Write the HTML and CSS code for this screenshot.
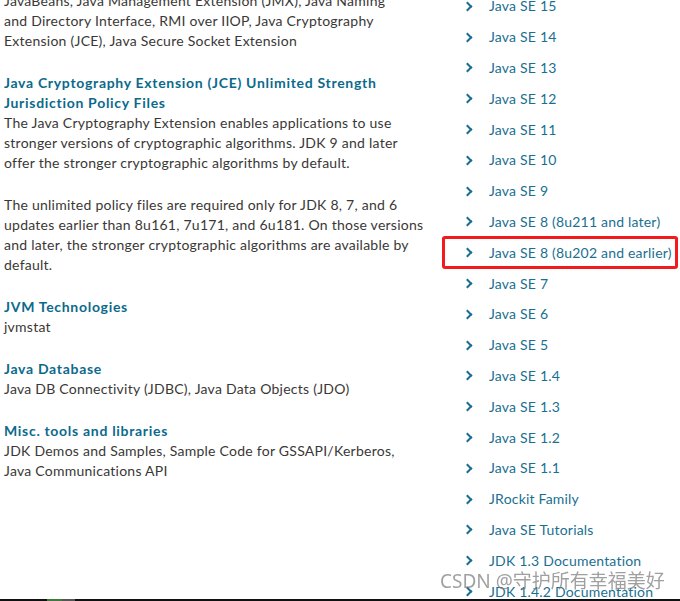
FILE: index.html
```html
<!DOCTYPE html>
<html lang="en">
<head>
<meta charset="utf-8">
<title>Java SE docs</title>
<link rel="stylesheet" href="styles.css">
</head>
<body>
<div class="page">
  <div class="main">
    <div class="block">
      <p>JavaBeans, Java Management Extension (JMX), Java Naming<br>and Directory Interface, RMI over IIOP, Java Cryptography<br>Extension (JCE), Java Secure Socket Extension</p>
    </div>
    <div class="block">
      <h3>Java Cryptography Extension (JCE) Unlimited Strength<br>Jurisdiction Policy Files</h3>
      <p>The Java Cryptography Extension enables applications to use<br>stronger versions of cryptographic algorithms. JDK 9 and later<br>offer the stronger cryptographic algorithms by default.</p>
    </div>
    <div class="block">
      <p>The unlimited policy files are required only for JDK 8, 7, and 6<br>updates earlier than 8u161, 7u171, and 6u181. On those versions<br>and later, the stronger cryptographic algorithms are available by<br>default.</p>
    </div>
    <div class="block">
      <h3>JVM Technologies</h3>
      <p>jvmstat</p>
    </div>
    <div class="block">
      <h3>Java Database</h3>
      <p>Java DB Connectivity (JDBC), Java Data Objects (JDO)</p>
    </div>
    <div class="block">
      <h3>Misc. tools and libraries</h3>
      <p>JDK Demos and Samples, Sample Code for GSSAPI/Kerberos,<br>Java Communications API</p>
    </div>
  </div>
  <ul class="side">
    <li><span class="chev"></span>Java SE 15</li>
    <li><span class="chev"></span>Java SE 14</li>
    <li><span class="chev"></span>Java SE 13</li>
    <li><span class="chev"></span>Java SE 12</li>
    <li><span class="chev"></span>Java SE 11</li>
    <li><span class="chev"></span>Java SE 10</li>
    <li><span class="chev"></span>Java SE 9</li>
    <li><span class="chev"></span>Java SE 8 (8u211 and later)</li>
    <li class="marked"><span class="chev"></span>Java SE 8 (8u202 and earlier)</li>
    <li><span class="chev"></span>Java SE 7</li>
    <li><span class="chev"></span>Java SE 6</li>
    <li><span class="chev"></span>Java SE 5</li>
    <li><span class="chev"></span>Java SE 1.4</li>
    <li><span class="chev"></span>Java SE 1.3</li>
    <li><span class="chev"></span>Java SE 1.2</li>
    <li><span class="chev"></span>Java SE 1.1</li>
    <li><span class="chev"></span>JRockit Family</li>
    <li><span class="chev"></span>Java SE Tutorials</li>
    <li><span class="chev"></span>JDK 1.3 Documentation</li>
    <li><span class="chev"></span>JDK 1.4.2 Documentation</li>
  </ul>
</div>
<div class="watermark">CSDN @守护所有幸福美好</div>
<div class="edge"><span class="edge-green"></span><span class="edge-grey"></span></div>
</body>
</html>
```
FILE: styles.css
```css
html, body {
  margin: 0;
  padding: 0;
  background: #ffffff;
  overflow: hidden;
  height: 601px;
}
body {
  font-family: Lato, "Noto Sans", sans-serif;
  font-size: 14px;
  line-height: 20px;
  letter-spacing: 0.25px;
  color: #3a3836;
}
.page {
  display: flex;
  margin-top: -9px;
}
.main {
  width: 418px;
  margin-left: 4px;
  flex: none;
  white-space: nowrap;
}
.block {
  margin-bottom: 22px;
}
.block p {
  margin: 0;
}
.block h3 {
  margin: 0;
  font-size: 14px;
  line-height: 20px;
  font-weight: 700;
  letter-spacing: 0.7px;
  color: #0b6a8c;
}
.side {
  list-style: none;
  margin: 0 0 0 20px;
  padding: 0;
  width: 236px;
  flex: none;
}
.side li {
  position: relative;
  display: flex;
  align-items: center;
  height: 30.8px;
  padding-left: 24px;
  color: #1a6f91;
  letter-spacing: 0.2px;
  white-space: nowrap;
}
.chev {
  width: 5px;
  height: 5px;
  border-top: 2px solid #1a6f91;
  border-right: 2px solid #1a6f91;
  transform: rotate(45deg);
  margin-right: 18px;
  margin-left: -2px;
  flex: none;
}
.side li.marked::after {
  content: "";
  position: absolute;
  left: 0;
  right: 0;
  top: -1px;
  bottom: -1px;
  border: 3px solid #f21a1a;
  border-radius: 3px;
}
.watermark {
  position: fixed;
  left: 440px;
  top: 568px;
  font-family: "Noto Sans", "Noto Sans CJK SC", sans-serif;
  font-size: 19px;
  line-height: 26px;
  letter-spacing: 0;
  color: rgba(120, 120, 120, 0.7);
  white-space: nowrap;
}
.edge {
  position: fixed;
  left: 0;
  right: 0;
  bottom: 0;
  height: 2px;
  background: #111111;
  display: flex;
}
.edge-green {
  margin-left: 47px;
  width: 15px;
  background: #3d7a3d;
}
.edge-grey {
  width: 13px;
  background: #555555;
}
```
